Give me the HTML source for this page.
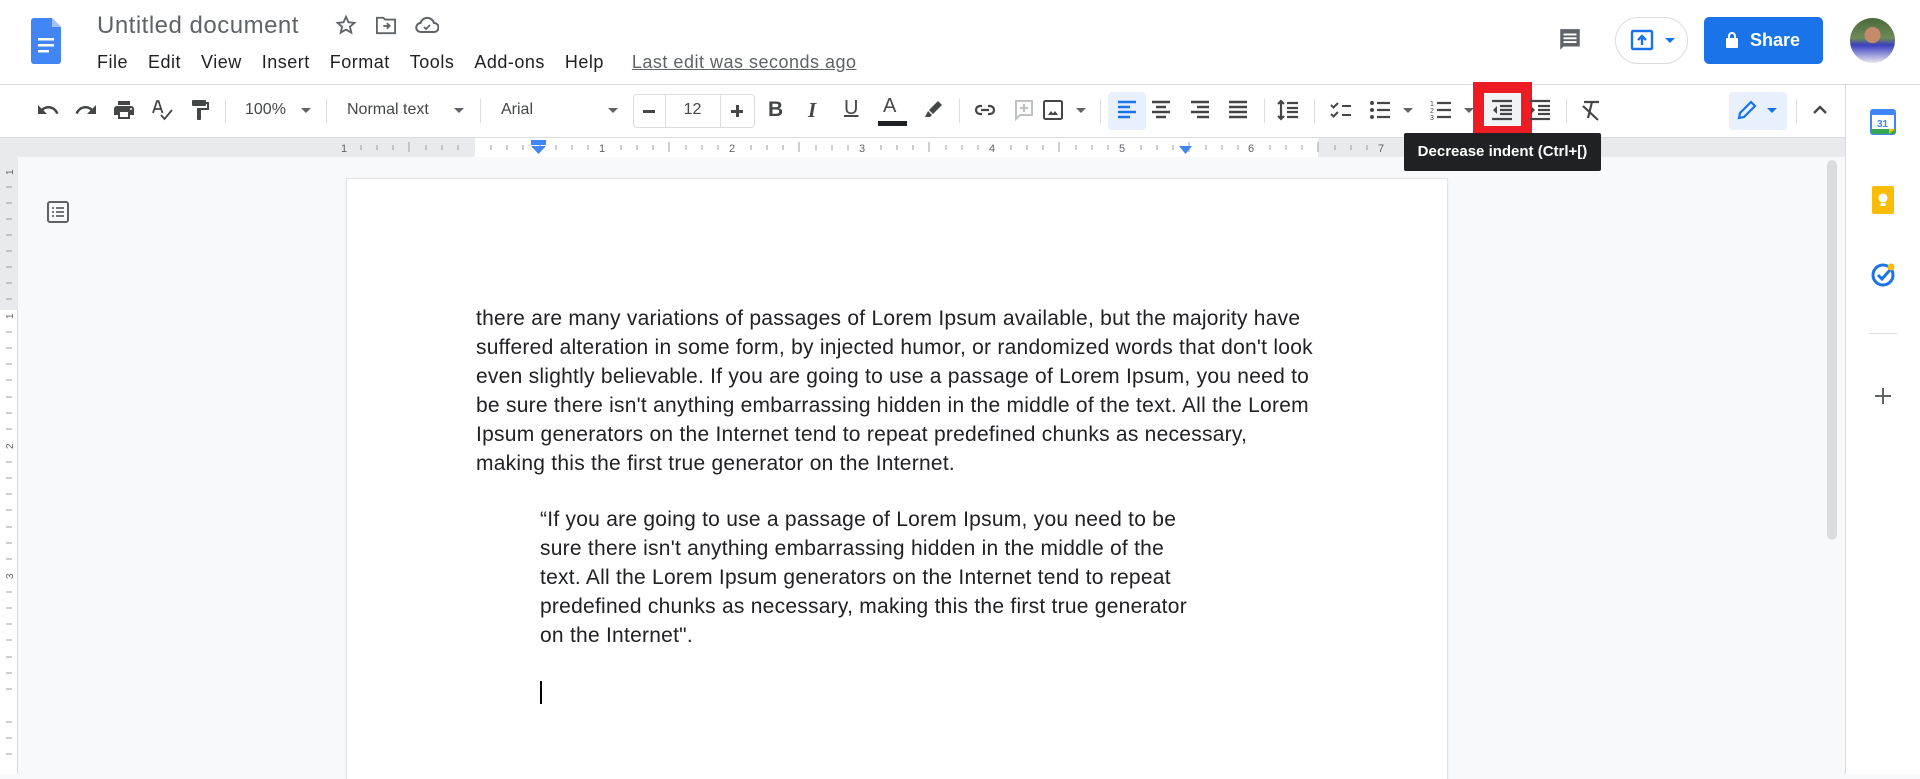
<!DOCTYPE html>
<html><head><meta charset="utf-8"><style>
*{box-sizing:border-box;margin:0;padding:0}
body{width:1920px;height:774px;overflow:hidden;background:#f8f9fa;font-family:"Liberation Sans",Arial,sans-serif;position:relative;color:#202124}
.a{position:absolute}
.hdr{left:0;top:0;width:1920px;height:85px;background:#fff;border-bottom:1px solid #dadce0}
.tb{left:0;top:85px;width:1845px;height:52px;background:#fff}
.ic{position:absolute;top:98px;width:24px;height:24px}
.sep{position:absolute;top:99px;width:1px;height:24px;background:#dadce0}
.car{position:absolute;top:108px;width:0;height:0;border-left:5px solid transparent;border-right:5px solid transparent;border-top:5px solid #5f6368}
.tt{font-size:18px;color:#3c4043;letter-spacing:0.5px}
.menu span{margin-right:20px}
.ln{position:absolute;white-space:nowrap;font-size:21px;letter-spacing:0.25px;color:#202124}
</style></head><body>
<div class="a hdr"></div>
<svg class="a" style="left:31px;top:18px" width="30" height="46" viewBox="0 0 30 46"><path d="M3 0h18l9 9v34a3 3 0 0 1-3 3H3a3 3 0 0 1-3-3V3a3 3 0 0 1 3-3z" fill="#4285f4"/><path d="M21 0v9h9z" fill="#a1c2fa"/><rect x="7" y="20" width="16" height="2.5" fill="#fff"/><rect x="7" y="26" width="16" height="2.5" fill="#fff"/><rect x="7" y="32" width="11" height="2.5" fill="#fff"/></svg>
<div class="a" style="left:97px;top:12px;font-size:24px;letter-spacing:0.5px;color:#5f6368">Untitled document</div>
<svg class="a" style="left:335px;top:14px" width="22" height="22" viewBox="0 0 24 24"><path d="M12 3l2.7 6 6.5.6-4.9 4.3 1.5 6.4L12 17l-5.8 3.3 1.5-6.4L2.8 9.6 9.3 9z" fill="none" stroke="#5f6368" stroke-width="2"/></svg>
<svg class="a" style="left:375px;top:15px" width="22" height="20" viewBox="0 0 24 22"><path d="M2 3h7l2 2h11v15H2z" fill="none" stroke="#5f6368" stroke-width="2"/><path d="M9 12h7m-3-3l3 3-3 3" fill="none" stroke="#5f6368" stroke-width="2"/></svg>
<svg class="a" style="left:415px;top:15px" width="24" height="20" viewBox="0 0 24 20"><path d="M6 17a4.5 4.5 0 0 1-.5-9A7 7 0 0 1 19 8a4.5 4.5 0 0 1 0 9z" fill="none" stroke="#5f6368" stroke-width="2"/><path d="M9 12l2 2 4-4" fill="none" stroke="#5f6368" stroke-width="1.8"/></svg>
<div class="a tt menu" style="left:97px;top:52px;color:#202124"><span>File</span><span>Edit</span><span>View</span><span>Insert</span><span>Format</span><span>Tools</span><span>Add-ons</span><span>Help</span><span style="margin-left:8px;color:#5f6368;text-decoration:underline">Last edit was seconds ago</span></div>
<svg class="a" style="left:1557px;top:27px" width="26" height="26" viewBox="0 0 24 24"><path d="M3 2h18v16H6l-3 3z" fill="#5f6368"/><rect x="6" y="6" width="12" height="1.8" fill="#fff"/><rect x="6" y="9.5" width="12" height="1.8" fill="#fff"/><rect x="6" y="13" width="12" height="1.8" fill="#fff"/></svg>
<div class="a" style="left:1615px;top:17px;width:73px;height:47px;border:1px solid #dadce0;border-radius:24px;background:#fff"></div>
<svg class="a" style="left:1630px;top:29px" width="24" height="22" viewBox="0 0 24 22"><rect x="2" y="2" width="20" height="18" rx="1" fill="none" stroke="#1a73e8" stroke-width="2.4"/><path d="M12 16V7m-4 4l4-4 4 4" fill="none" stroke="#1a73e8" stroke-width="2.4"/></svg>
<div class="car" style="left:1665px;top:38px;border-top-color:#1a73e8"></div>
<div class="a" style="left:1704px;top:17px;width:119px;height:47px;background:#1a73e8;border-radius:5px;color:#fff;font-size:18px;font-weight:bold;line-height:47px;padding-left:46px">Share</div>
<svg class="a" style="left:1726px;top:31px" width="12" height="17" viewBox="0 0 12 17"><rect x="0" y="7" width="12" height="10" rx="1" fill="#fff"/><path d="M3 8V5a3 3 0 0 1 6 0v3" fill="none" stroke="#fff" stroke-width="2"/></svg>
<div class="a" style="left:1850px;top:18px;width:45px;height:45px;border-radius:50%;background:radial-gradient(circle at 50% 38%,#c48a6a 0 22%,transparent 23%),linear-gradient(180deg,#4a6a3a 0,#6f8a58 45%,#3b3fbf 60%,#e8e8f0 100%)"></div>

<div class="a tb"></div>
<svg class="ic" style="left:36px" viewBox="0 0 24 24"><path d="M12.5 8c-2.6 0-5 1-6.9 2.6L2 7v9h9l-3.6-3.6c1.4-1.2 3.2-1.9 5.1-1.9 3.5 0 6.5 2.3 7.6 5.5l2.4-.8C21 11 17.1 8 12.5 8z" fill="#444746"/></svg>
<svg class="ic" style="left:74px" viewBox="0 0 24 24"><path d="M18.4 10.6C16.6 9 14.1 8 11.5 8 6.9 8 3 11 1.5 15.2l2.4.8c1.1-3.2 4.1-5.5 7.6-5.5 1.9 0 3.7.7 5.1 1.9L13 16h9V7z" fill="#444746"/></svg>
<svg class="ic" style="left:112px" viewBox="0 0 24 24"><path d="M19 8H5c-1.7 0-3 1.3-3 3v6h4v4h12v-4h4v-6c0-1.7-1.3-3-3-3zm-3 11H8v-5h8zm3-7a1 1 0 1 1 0-2 1 1 0 0 1 0 2zM18 3H6v4h12z" fill="#444746"/></svg>
<svg class="ic" style="left:150px" viewBox="0 0 24 24"><path d="M3 15L7 3h1.5l4 12M4.5 11h6.5M11 17l3.5 4L22 12" fill="none" stroke="#444746" stroke-width="1.8"/></svg>
<svg class="ic" style="left:188px" viewBox="0 0 24 24"><path d="M18 4V3c0-.6-.4-1-1-1H5c-.6 0-1 .4-1 1v4c0 .6.4 1 1 1h12c.6 0 1-.4 1-1V6h1v4H9v11c0 .6.4 1 1 1h2c.6 0 1-.4 1-1v-9h8V4z" fill="#444746"/></svg>
<div class="sep" style="left:225px"></div>
<div class="a" style="left:245px;top:101px;font-size:16px;color:#444746">100%</div><div class="car" style="left:301px"></div>
<div class="sep" style="left:326px"></div>
<div class="a" style="left:347px;top:101px;font-size:16px;color:#444746">Normal text</div><div class="car" style="left:454px"></div>
<div class="sep" style="left:480px"></div>
<div class="a" style="left:501px;top:101px;font-size:16px;color:#444746">Arial</div><div class="car" style="left:608px"></div>
<div class="a" style="left:633px;top:94px;width:122px;height:34px;border:1px solid #dadce0;border-radius:4px"></div>
<div class="a" style="left:665px;top:94px;width:1px;height:34px;background:#dadce0"></div><div class="a" style="left:720px;top:94px;width:1px;height:34px;background:#dadce0"></div>
<div class="a" style="left:643px;top:110px;width:12px;height:2.5px;background:#444746"></div>
<div class="a" style="left:665px;top:101px;width:55px;text-align:center;font-size:16px;color:#444746">12</div>
<div class="a" style="left:731px;top:110px;width:12px;height:2.5px;background:#444746"></div><div class="a" style="left:736px;top:105px;width:2.5px;height:12px;background:#444746"></div>
<div class="a" style="left:768px;top:98px;font-size:21px;font-weight:bold;color:#444746">B</div>
<div class="a" style="left:808px;top:98px;font-size:21px;font-style:italic;font-family:'Liberation Serif',serif;font-weight:bold;color:#444746">I</div>
<div class="a" style="left:844px;top:97px;font-size:20px;color:#444746;text-decoration:underline">U</div>
<div class="a" style="left:883px;top:95px;font-size:20px;color:#444746">A</div><div class="a" style="left:878px;top:121px;width:29px;height:5px;background:#202124"></div>
<svg class="ic" style="left:921px" viewBox="0 0 24 24"><path d="M17 3l4 4-9 9-4-4zM7 13l4 4-2 2H4z" fill="#444746"/></svg>
<div class="sep" style="left:959px"></div>
<svg class="ic" style="left:973px" viewBox="0 0 24 24"><path d="M9 8H7a4 4 0 0 0 0 8h2M15 8h2a4 4 0 0 1 0 8h-2M8 12h8" fill="none" stroke="#444746" stroke-width="2.2"/></svg>
<svg class="ic" style="left:1012px" viewBox="0 0 24 24"><path d="M4 3h16v14H8l-4 4z" fill="none" stroke="#bdc1c6" stroke-width="2"/><path d="M12 6v8M8 10h8" stroke="#bdc1c6" stroke-width="2"/></svg>
<svg class="ic" style="left:1041px" viewBox="0 0 24 24"><rect x="3" y="3" width="18" height="18" rx="1.5" fill="none" stroke="#444746" stroke-width="2"/><path d="M7 17l3-4 2 2.5 2-2.5 3 4z" fill="#444746"/></svg>
<div class="car" style="left:1076px"></div>
<div class="sep" style="left:1100px"></div>
<div class="a" style="left:1108px;top:92px;width:38px;height:38px;background:#e8f0fe;border-radius:4px"></div>
<svg class="ic" style="left:1115px" viewBox="0 0 24 24"><path d="M3 4h18M3 9h12M3 14h18M3 19h12" stroke="#1a73e8" stroke-width="2.4"/></svg>
<svg class="ic" style="left:1149px" viewBox="0 0 24 24"><path d="M3 4h18M7 9h10M3 14h18M7 19h10" stroke="#444746" stroke-width="2.4"/></svg>
<svg class="ic" style="left:1188px" viewBox="0 0 24 24"><path d="M3 4h18M9 9h12M3 14h18M9 19h12" stroke="#444746" stroke-width="2.4"/></svg>
<svg class="ic" style="left:1226px" viewBox="0 0 24 24"><path d="M3 4h18M3 9h18M3 14h18M3 19h18" stroke="#444746" stroke-width="2.4"/></svg>
<div class="sep" style="left:1264px"></div>
<svg class="ic" style="left:1276px" viewBox="0 0 24 24"><path d="M5 3v18M2 6l3-3 3 3M2 18l3 3 3-3M11 5h11M11 10h11M11 14h11M11 19h11" fill="none" stroke="#444746" stroke-width="2.2"/></svg>
<div class="sep" style="left:1314px"></div>
<svg class="ic" style="left:1329px" viewBox="0 0 24 24"><path d="M2 7l2.5 2.5L9 5M2 16l2.5 2.5L9 14M13 8h9M13 17h9" fill="none" stroke="#444746" stroke-width="2"/></svg>
<svg class="ic" style="left:1368px" viewBox="0 0 24 24"><circle cx="4" cy="5" r="2" fill="#444746"/><circle cx="4" cy="12" r="2" fill="#444746"/><circle cx="4" cy="19" r="2" fill="#444746"/><path d="M9 5h13M9 12h13M9 19h13" stroke="#444746" stroke-width="2.2"/></svg>
<div class="car" style="left:1403px"></div>
<svg class="ic" style="left:1429px" viewBox="0 0 24 24"><text x="1" y="8" font-size="7" fill="#444746" font-family="Liberation Sans">1</text><text x="1" y="15" font-size="7" fill="#444746" font-family="Liberation Sans">2</text><text x="1" y="22" font-size="7" fill="#444746" font-family="Liberation Sans">3</text><path d="M8 5h14M8 12h14M8 19h14" stroke="#444746" stroke-width="2.2"/></svg>
<div class="car" style="left:1464px"></div>
<div class="a" style="left:1484px;top:92px;width:38px;height:38px;background:#f1f3f4"></div>
<svg class="ic" style="left:1490px" viewBox="0 0 24 24"><path d="M2 3h20M10 8h12M10 12h12M10 16h12M2 21h20" stroke="#444746" stroke-width="2.2"/><path d="M7 8l-4 4 4 4z" fill="#444746"/></svg>
<div class="a" style="left:1473px;top:82px;width:59px;height:55px;border:11px solid #ed1c24"></div>
<svg class="ic" style="left:1528px" viewBox="0 0 24 24"><path d="M2 3h20M10 8h12M10 12h12M10 16h12M2 21h20" stroke="#444746" stroke-width="2.2"/><path d="M3 8l4 4-4 4z" fill="#444746"/></svg>
<div class="sep" style="left:1566px"></div>
<svg class="ic" style="left:1579px" viewBox="0 0 24 24"><path d="M5 4h15M13 4l-4 16M4 8l15 14" fill="none" stroke="#444746" stroke-width="2.2"/></svg>
<div class="a" style="left:1729px;top:92px;width:58px;height:38px;background:#e8f0fe;border-radius:4px"></div>
<svg class="ic" style="left:1735px" viewBox="0 0 24 24"><path d="M4 20l1-5L16 4l4 4L9 19z" fill="none" stroke="#1a73e8" stroke-width="2.2"/></svg>
<div class="car" style="left:1767px;border-top-color:#1a73e8"></div>
<div class="sep" style="left:1796px"></div>
<svg class="ic" style="left:1808px" viewBox="0 0 24 24"><path d="M6 15l6-6 6 6" fill="none" stroke="#444746" stroke-width="2.4"/></svg>

<div class="a" style="left:0;top:137px;width:1845px;height:20px;background:#e8eaed;border-top:1px solid #dadce0"></div>
<div class="a" style="left:475px;top:138px;width:843px;height:19px;background:#fff"></div>
<svg class="a" style="left:0;top:138px" width="1845" height="19">
<g fill="#5f6368" font-size="11" font-family="Liberation Sans" text-anchor="middle">
<text x="344" y="14">1</text><text x="602" y="14">1</text><text x="732" y="14">2</text><text x="862" y="14">3</text><text x="992" y="14">4</text><text x="1122" y="14">5</text><text x="1251" y="14">6</text><text x="1381" y="14">7</text></g>
<g stroke="#9aa0a6" stroke-width="1">
<path d="M361 7v5M377 7v5M393 7v5M409 4v10M426 7v5M442 7v5M458 7v5M491 7v5M507 7v5M523 7v5M540 7v5M556 7v5M572 7v5M588 7v5M621 7v5M637 7v5M653 7v5M669 4v10M686 7v5M702 7v5M718 7v5M751 7v5M767 7v5M783 7v5M799 4v10M816 7v5M832 7v5M848 7v5M881 7v5M897 7v5M913 7v5M929 4v10M946 7v5M962 7v5M978 7v5M1011 7v5M1027 7v5M1043 7v5M1059 4v10M1076 7v5M1092 7v5M1108 7v5M1141 7v5M1157 7v5M1173 7v5M1189 4v10M1206 7v5M1222 7v5M1238 7v5M1270 7v5M1286 7v5M1302 7v5M1318 4v10M1335 7v5M1351 7v5M1367 7v5"/></g>
<rect x="531" y="2" width="15" height="5" fill="#4285f4"/><path d="M531 8h15l-7.5 8z" fill="#4285f4"/><path d="M1179 8h13l-6.5 8z" fill="#4285f4"/></svg>
<div class="a" style="left:0;top:157px;width:18px;height:617px;background:#fff;border-right:1px solid #dadce0"></div>
<div class="a" style="left:0;top:157px;width:18px;height:153px;background:#e8eaed"></div>
<svg class="a" style="left:0;top:157px" width="18" height="617"><g stroke="#9aa0a6"><path d="M6 30h6M6 46h6M6 62h6M6 78h6M6 94h6M6 110h6M6 126h6M6 142h6M6 175h6M6 191h6M6 207h6M6 223h6M6 240h6M6 256h6M6 272h6M6 305h6M6 321h6M6 337h6M6 353h6M6 370h6M6 386h6M6 402h6M6 435h6M6 451h6M6 467h6M6 483h6M6 500h6M6 516h6M6 532h6M6 565h6M6 581h6M6 597h6"/></g>
<g fill="#5f6368" font-size="10" font-family="Liberation Sans"><text x="5" y="18" transform="rotate(-90 9 14)">1</text><text x="5" y="162" transform="rotate(-90 9 158)">1</text><text x="5" y="292" transform="rotate(-90 9 288)">2</text><text x="5" y="422" transform="rotate(-90 9 418)">3</text></g></svg>
<svg class="a" style="left:46px;top:200px" width="24" height="24" viewBox="0 0 24 24"><rect x="2" y="2" width="20" height="20" rx="2" fill="none" stroke="#5f6368" stroke-width="2"/><path d="M6 8h2M10 8h8M6 12h2M10 12h8M6 16h2M10 16h8" stroke="#5f6368" stroke-width="1.8"/></svg>
<div class="a" style="left:347px;top:179px;width:1100px;height:600px;background:#fff;box-shadow:0 0 0 1px #e2e3e5,0 1px 3px rgba(60,64,67,.15)"></div>
<div class="ln" style="left:476px;top:307px">there are many variations of passages of Lorem Ipsum available, but the majority have</div>
<div class="ln" style="left:476px;top:336px">suffered alteration in some form, by injected humor, or randomized words that don't look</div>
<div class="ln" style="left:476px;top:365px">even slightly believable. If you are going to use a passage of Lorem Ipsum, you need to</div>
<div class="ln" style="left:476px;top:394px">be sure there isn't anything embarrassing hidden in the middle of the text. All the Lorem</div>
<div class="ln" style="left:476px;top:423px">Ipsum generators on the Internet tend to repeat predefined chunks as necessary,</div>
<div class="ln" style="left:476px;top:452px">making this the first true generator on the Internet.</div>
<div class="ln" style="left:540px;top:508px">“If you are going to use a passage of Lorem Ipsum, you need to be</div>
<div class="ln" style="left:540px;top:537px">sure there isn't anything embarrassing hidden in the middle of the</div>
<div class="ln" style="left:540px;top:566px">text. All the Lorem Ipsum generators on the Internet tend to repeat</div>
<div class="ln" style="left:540px;top:595px">predefined chunks as necessary, making this the first true generator</div>
<div class="ln" style="left:540px;top:624px">on the Internet".</div>
<div class="a" style="left:540px;top:681px;width:2px;height:23px;background:#000"></div>
<div class="a" style="left:1827px;top:160px;width:10px;height:380px;background:#dadce0;border-radius:5px"></div>
<div class="a" style="left:1845px;top:85px;width:75px;height:689px;background:#fff;border-left:1px solid #dadce0"></div>
<svg class="a" style="left:1870px;top:109px" width="26" height="26" viewBox="0 0 26 26"><rect x="1" y="1" width="24" height="24" rx="2" fill="#fff" stroke="#4285f4" stroke-width="2"/><rect x="1" y="1" width="24" height="5" fill="#4285f4"/><path d="M1 20h24v3a2 2 0 0 1-2 2H3a2 2 0 0 1-2-2z" fill="#34a853"/><path d="M19 20h6l-6 5z" fill="#fbbc04"/><text x="7" y="18" font-size="10" fill="#4285f4" font-family="Liberation Sans" font-weight="bold">31</text></svg>
<svg class="a" style="left:1872px;top:186px" width="22" height="28" viewBox="0 0 22 28"><rect width="22" height="28" rx="2" fill="#fbbc04"/><circle cx="11" cy="12" r="4.5" fill="#fff"/><rect x="8.5" y="17" width="5" height="3" fill="#fff"/></svg>
<svg class="a" style="left:1870px;top:262px" width="26" height="26" viewBox="0 0 26 26"><circle cx="13" cy="13" r="10" fill="none" stroke="#1a73e8" stroke-width="3"/><path d="M8 13l4 4 8-9" fill="none" stroke="#1a73e8" stroke-width="3"/><circle cx="21" cy="5" r="3.5" fill="#fbbc04"/></svg>
<div class="a" style="left:1869px;top:333px;width:28px;height:1px;background:#dadce0"></div>
<svg class="a" style="left:1874px;top:387px" width="18" height="18" viewBox="0 0 18 18"><path d="M9 1v16M1 9h16" stroke="#5f6368" stroke-width="2"/></svg>
<div class="a" style="left:1404px;top:133px;width:197px;height:38px;background:#202124;border-radius:2px;color:#fff;font-size:15px;font-weight:bold;line-height:38px;text-align:center">Decrease indent (Ctrl+[)</div>
</body></html>
